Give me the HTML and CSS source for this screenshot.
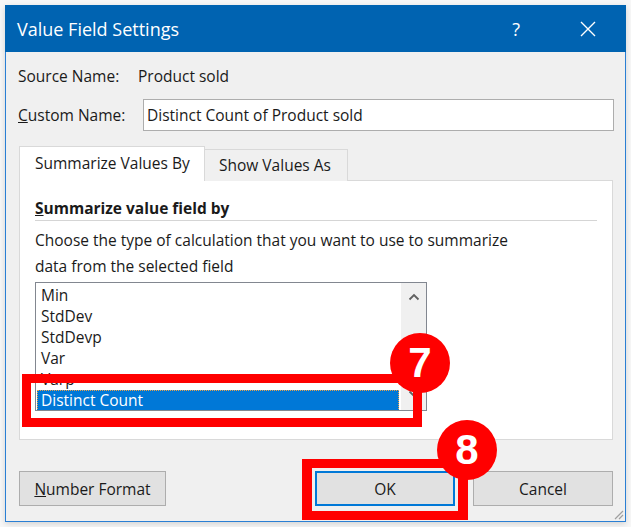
FILE: index.html
```html
<!DOCTYPE html>
<html lang="en">
<head>
    <meta charset="UTF-8">
    <title>Value Field Settings</title>
    <link rel="stylesheet" href="styles.css">
</head>
<body>

<div class="window">
    <!-- Title bar -->
    <div class="titlebar">
        <span class="title">Value Field Settings</span>
        <span class="help">?</span>
        <svg class="close" width="16" height="16" viewBox="0 0 16 16">
            <path d="M1 1 L15 15 M15 1 L1 15" stroke="#fff" stroke-width="1.4" fill="none"/>
        </svg>
    </div>

    <div class="content">
        <div class="row source-row">
            <span class="label">Source Name:</span>
            <span class="source-value">Product sold</span>
        </div>
        <div class="row custom-row">
            <span class="label"><u>C</u>ustom Name:</span>
            <div class="text-input">Distinct Count of Product sold</div>
        </div>

        <!-- Tabs -->
        <div class="tabs">
            <div class="tab active">Summarize Values By</div>
            <div class="tab">Show Values As</div>
        </div>
        <div class="panel">
            <div class="section-title"><u>S</u>ummarize value field by</div>
            <div class="separator"></div>
            <p class="hint">Choose the type of calculation that you want to use to summarize<br>data from the selected field</p>

            <div class="listbox">
                <div class="list-items">
                    <div class="item">Min</div>
                    <div class="item">StdDev</div>
                    <div class="item">StdDevp</div>
                    <div class="item">Var</div>
                    <div class="item">Varp</div>
                    <div class="item selected">Distinct Count</div>
                </div>
                <div class="scrollbar">
                    <svg width="12" height="8" viewBox="0 0 12 8">
                        <path d="M1.5 6.5 L6 2 L10.5 6.5" stroke="#606060" stroke-width="1.8" fill="none"/>
                    </svg>
                    <svg width="12" height="8" viewBox="0 0 12 8">
                        <path d="M1.5 1.5 L6 6 L10.5 1.5" stroke="#606060" stroke-width="1.8" fill="none"/>
                    </svg>
                </div>
            </div>
        </div>

        <!-- Buttons -->
        <div class="buttons">
            <button class="btn"><u>N</u>umber Format</button>
            <div class="btn-group">
                <button class="btn default">OK</button>
                <button class="btn">Cancel</button>
            </div>
        </div>
        <svg class="grip" width="12" height="12" viewBox="0 0 12 12">
            <path d="M11 3 L3 11 M11 7 L7 11 M11 11 L11 11" stroke="#a0a0a0" stroke-width="1.2" fill="none"/>
        </svg>
    </div>
</div>

<!-- Step annotations -->
<div class="mark mark-list"></div>
<div class="mark mark-ok"></div>
<div class="badge badge-7">7</div>
<div class="badge badge-8">8</div>

</body>
</html>
```

FILE: styles.css
```css
* {
    margin: 0;
    padding: 0;
    box-sizing: border-box;
}
body {
    font-family: "Open Sans", "Noto Sans", sans-serif;
    font-size: 15.5px;
    color: #1a1a1a;
    background-color: #f7f7f7;
    width: 631px;
    height: 527px;
    overflow: hidden;
    position: relative;
}

/* Dialog window */
.window {
    margin: 5px 0 0 5px;
    width: 621px;
    height: 517px;
    background-color: #f0f0f0;
    border: 1px solid #2a7fd4;
    border-top: none;
    box-shadow: 0 2px 6px rgba(0, 0, 0, 0.15);
    display: flex;
    flex-direction: column;
}
.titlebar {
    height: 47px;
    background-color: #0063b1;
    color: #fff;
    display: flex;
    align-items: center;
    padding: 0 0 0 12px;
    margin: 0 -1px;
}
.title {
    font-size: 18px;
    flex: 1;
}
.help {
    font-size: 18px;
    margin-right: 60px;
}
.close {
    margin-right: 30px;
}

.content {
    flex: 1;
    padding: 13px 13px 0 12px;
    position: relative;
}
.row {
    display: flex;
    align-items: center;
}
.source-row {
    height: 22px;
}
.label {
    width: 120px;
}
.custom-row {
    margin-top: 12px;
    height: 32px;
}
.custom-row .label {
    width: 125px;
}
.text-input {
    flex: 1;
    height: 32px;
    margin-right: -2px;
    background-color: #fff;
    border: 1px solid #adadad;
    padding: 0 3px;
    line-height: 30px;
}

/* Tabs */
.tabs {
    margin-top: 15px;
    margin-left: 1px;
    display: flex;
    align-items: flex-end;
    height: 35px;
    position: relative;
    z-index: 1;
}
.tab {
    height: 32px;
    width: 143px;
    padding: 0 14px;
    line-height: 31px;
    border: 1px solid #d9d9d9;
    border-left: none;
    border-bottom: none;
    background-color: #f0f0f0;
    white-space: nowrap;
}
.tab.active {
    height: 35px;
    width: 186px;
    padding: 0 15px;
    background-color: #fff;
    border-left: 1px solid #d9d9d9;
    line-height: 33px;
}
.panel {
    margin-top: -1px;
    margin-left: 1px;
    height: 260px;
    margin-right: -1px;
    background-color: #fff;
    border: 1px solid #d9d9d9;
    padding: 16px 15px 0 15px;
}
.section-title {
    font-weight: bold;
    line-height: 22px;
}
.separator {
    height: 1px;
    background-color: #d5d5d5;
    margin: 1px 0 0 0;
}
.hint {
    margin-top: 6px;
    line-height: 26px;
}
.listbox {
    margin-top: 3px;
    width: 392px;
    height: 129px;
    border: 1px solid #828790;
    display: flex;
    background-color: #fff;
    overflow: hidden;
}
.list-items {
    flex: 1;
    padding: 2px 2px 0 1px;
}
.item {
    height: 21px;
    line-height: 21px;
    padding-left: 4px;
}
.item.selected {
    background-color: #0078d7;
    color: #fff;
    border: 1px dotted #e9a24a;
    line-height: 19px;
    padding-left: 3px;
}
.scrollbar {
    width: 25px;
    background-color: #f0f0f0;
    display: flex;
    flex-direction: column;
    justify-content: space-between;
    align-items: center;
    padding: 10px 0 12px 0;
}

/* Buttons */
.buttons {
    margin-top: 31px;
    margin-left: 1px;
    display: flex;
    justify-content: space-between;
    margin-right: -1px;
}
.btn-group {
    display: flex;
    gap: 18px;
}
.btn {
    font-family: inherit;
    font-size: 15.5px;
    color: #1a1a1a;
    height: 35px;
    width: 140px;
    background-color: #e1e1e1;
    border: 1px solid #adadad;
}
.buttons > .btn {
    width: 147px;
}
.btn.default {
    border: 2px solid #0078d7;
    width: 140px;
}
.grip {
    position: absolute;
    right: 1px;
    bottom: 1px;
}

/* Annotations */
.mark {
    position: absolute;
    border: 9px solid #ff0000;
}
.mark-list {
    left: 22px;
    top: 374px;
    width: 400px;
    height: 53px;
}
.mark-ok {
    left: 302px;
    top: 459px;
    width: 166px;
    height: 61px;
    border-width: 9px 10px 9px 10px;
}
.badge {
    position: absolute;
    width: 60px;
    height: 60px;
    border-radius: 50%;
    background-color: #ff0000;
    color: #fff;
    font-family: "Liberation Sans", Arial, sans-serif;
    font-weight: bold;
    font-size: 42px;
    line-height: 60px;
    text-align: center;
}
.badge-7 {
    left: 390px;
    top: 333px;
}
.badge-8 {
    left: 437px;
    top: 420px;
}
```
